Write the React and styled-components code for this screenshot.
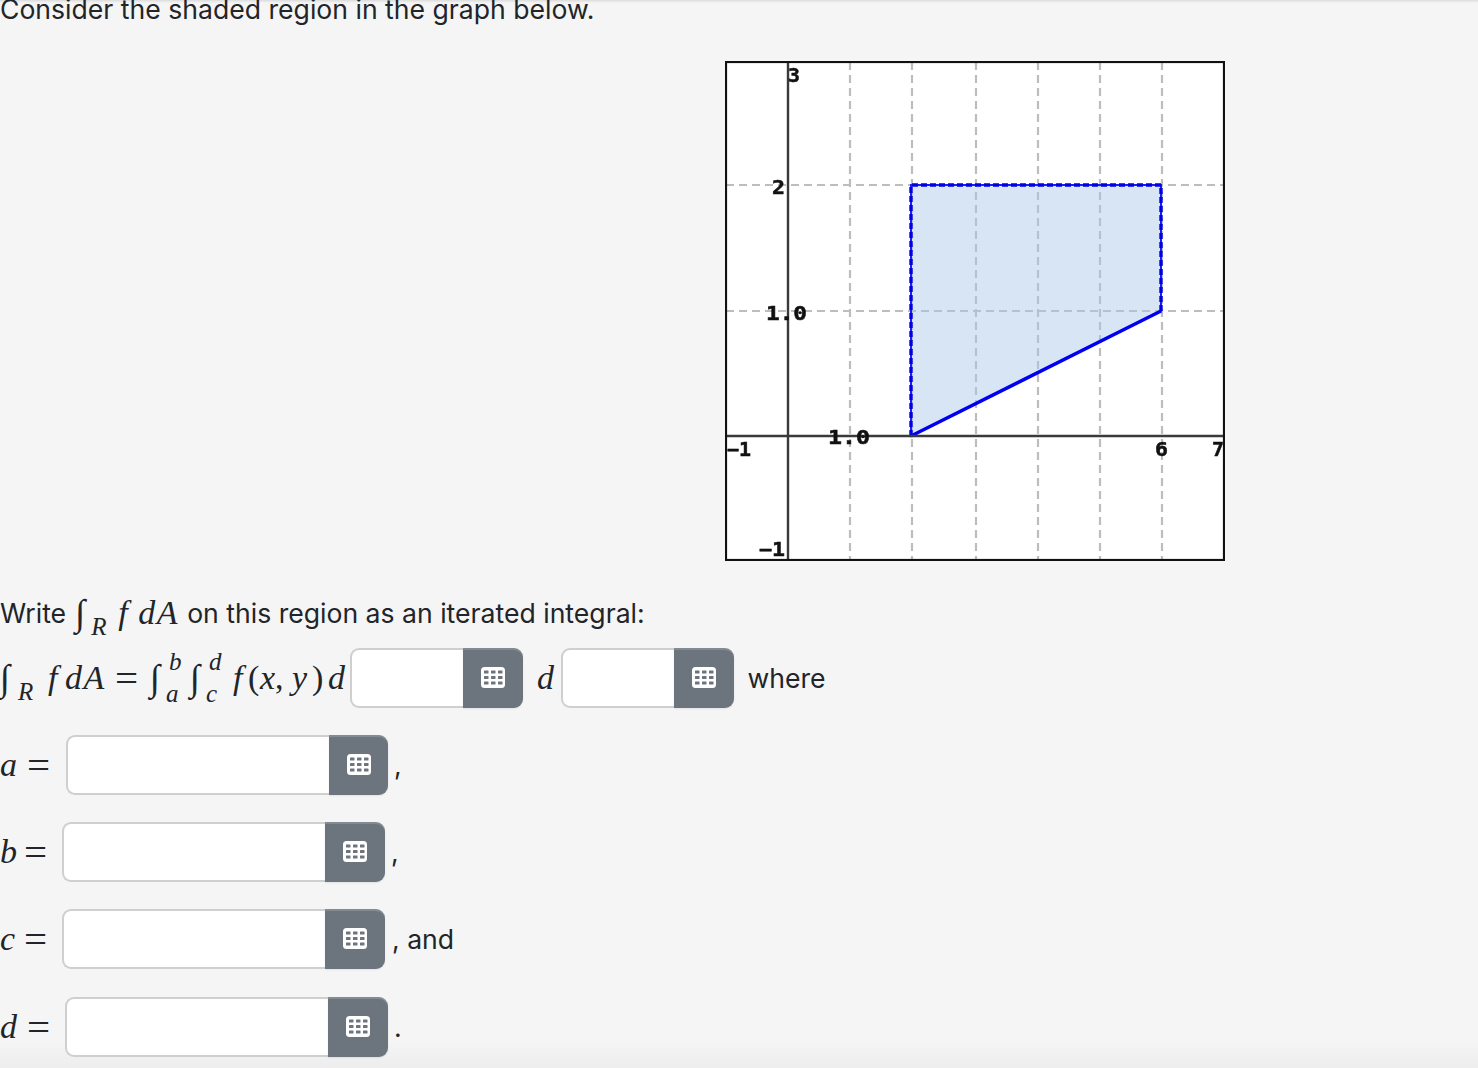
import React from "react";
import styled, { createGlobalStyle } from "styled-components";

const Global = createGlobalStyle`
  html, body { margin: 0; padding: 0; height: 100%; overflow: hidden; background: #f5f5f5; }
  #root { height: 100%; }
`;

const Page = styled.main`
  height: 1068px;
  overflow: hidden;
  position: relative;
  background: #f5f5f5;
  color: #212529;
  font-family: Inter, "Liberation Sans", sans-serif;
  font-size: 26.6px;
  line-height: 40px;
  &::before {
    content: "";
    position: absolute;
    inset: 0 0 auto 0;
    height: 3px;
    background: linear-gradient(rgba(0, 0, 0, 0.1), rgba(0, 0, 0, 0));
    z-index: 2;
  }
  &::after {
    content: "";
    position: absolute;
    inset: auto 0 0 0;
    height: 26px;
    background: linear-gradient(rgba(235, 235, 235, 0), rgba(235, 235, 235, 0.8));
    pointer-events: none;
    z-index: 0;
  }
`;

const Content = styled.div`
  position: relative;
  z-index: 1;
  margin-top: -11px;
`;

const Prompt = styled.p`
  margin: 0;
`;

const Figure = styled.figure`
  margin: 32px 0 0 725px;
  width: 500px;
  height: 500px;
  line-height: 0;
`;

const GraphSvg = styled.svg`
  display: block;
  filter: blur(0.4px);
`;

const Para = styled.p`
  margin: 32px 0 0;
  height: 40px;
  display: flex;
  align-items: center;
  white-space: pre;
`;

const FormulaRow = styled.div`
  margin-top: 15px;
  display: flex;
  align-items: center;
  height: 60px;
  white-space: pre;
`;

const Math = styled.span`
  display: inline-flex;
  align-items: center;
  font-family: "Liberation Serif", "DejaVu Serif", serif;
  font-size: 34px;
  line-height: 40px;
  color: #212529;
  flex: none;
  width: ${(p) => (p.$w ? `${p.$w}px` : "auto")};
  margin-left: ${(p) => p.$ml || 0}px;
`;

const Var = styled.i`
  display: inline-block;
  flex: none;
  font-style: italic;
  box-sizing: border-box;
  width: ${(p) => (p.$w ? `${p.$w}px` : "auto")};
  padding-left: ${(p) => p.$pl || 0}px;
  letter-spacing: ${(p) => p.$ls || 0}px;
`;

const Punct = styled.span`
  display: inline-block;
  flex: none;
  width: ${(p) => p.$w}px;
`;

const Op = styled.span`
  display: inline-block;
  flex: none;
  font-size: 41px;
  width: 23px;
  margin-left: ${(p) => p.$ml || 0}px;
  margin-right: ${(p) => p.$mr || 0}px;
`;

const Sign = styled.span`
  display: inline-block;
  flex: none;
  width: 16px;
  font-size: 37px;
  font-style: italic;
  line-height: 40px;
`;

const Limits = styled.span`
  display: inline-flex;
  flex: none;
  flex-direction: column;
  justify-content: center;
  font-family: "Liberation Serif", serif;
  font-style: italic;
  font-size: 25px;
  line-height: 18px;
  width: ${(p) => p.$w}px;
  margin-left: ${(p) => p.$ml || 0}px;
`;

const Lim = styled.span`
  position: relative;
  top: ${(p) => p.$top || 0}px;
  left: ${(p) => p.$left || 0}px;
  height: 18px;
`;

const Group = styled.div`
  display: flex;
  flex: none;
  width: ${(p) => p.$w}px;
  height: 60px;
`;

const Field = styled.input`
  flex: 1;
  min-width: 0;
  box-sizing: border-box;
  height: 60px;
  border: 2px solid #cfcfcf;
  border-right: 0;
  border-radius: 9px 0 0 9px;
  background: #fff;
  outline: none;
  padding: 0;
`;

const CalcButton = styled.button`
  flex: none;
  width: ${(p) => p.$bw || 60}px;
  height: 60px;
  padding: 0 0 2px;
  border: 0;
  border-radius: 0 9px 9px 0;
  background: #6c757d;
  box-shadow: inset 0 2px 0 rgba(255, 255, 255, 0.16), 0 1px 2px rgba(0, 0, 0, 0.08);
  display: flex;
  align-items: center;
  justify-content: center;
`;

const AnswerRow = styled.div`
  display: flex;
  align-items: center;
  height: 60px;
  margin-top: ${(p) => p.$mt}px;
  white-space: pre;
`;

const After = styled.span`
  margin-left: ${(p) => p.$ml || 0}px;
`;

const GridIcon = () => (
  <svg width="24" height="21" viewBox="0 0 24 21" aria-hidden="true">
    <rect width="24" height="21" rx="3.5" fill="#fff" />
    {[3.5, 9, 14.5].map((y) =>
      [3, 10, 17].map((x) => <rect key={`${x}-${y}`} x={x} y={y} width="4.5" height="3" rx="0.5" fill="#6c757d" />)
    )}
  </svg>
);

const Answer = ({ w, bw }) => (
  <Group $w={w}>
    <Field />
    <CalcButton type="button" $bw={bw}>
      <GridIcon />
    </CalcButton>
  </Group>
);

const xs = [850, 912, 976, 1038, 1100, 1162];
const ys = [185, 311];
const labels = [
  { x: 788, y: 82, t: "3", len: 12 },
  { x: 772, y: 194, t: "2", len: 13 },
  { x: 766, y: 320, t: "1.0", len: 41 },
  { x: 828, y: 444, t: "1.0", len: 42 },
  { x: 727, y: 456, t: "−1", len: 24 },
  { x: 759, y: 556, t: "−1", len: 26 },
  { x: 1155, y: 456, t: "6", len: 13 },
  { x: 1212, y: 456, t: "7", len: 12 },
];

const Graph = () => (
  <GraphSvg width="500" height="500" viewBox="725 61 500 500">
    <rect x="726" y="62" width="498" height="498" fill="#fff" />
    <g stroke="#bdbdbd" strokeWidth="2.2" strokeDasharray="8 5" fill="none">
      {xs.map((x) => <line key={x} x1={x} y1="62" x2={x} y2="560" />)}
      {ys.map((y) => <line key={y} x1="726" y1={y} x2="1224" y2={y} />)}
    </g>
    <polygon points="911,436 911,185 1161,185 1161,311" fill="#a9c6e6" fillOpacity="0.45" />
    <polygon points="911,436 911,185 1161,185 1161,311" fill="none" stroke="#1c1cf0" strokeWidth="2" />
    <polyline points="911,436 911,185 1161,185 1161,311" fill="none" stroke="#0000e6" strokeWidth="3.4" strokeDasharray="6 3" />
    <line x1="911" y1="436" x2="1161" y2="311" stroke="#0000f0" strokeWidth="3.4" />
    <g stroke="#3a3a3a" strokeWidth="2.4">
      <line x1="788" y1="62" x2="788" y2="560" />
      <line x1="726" y1="436" x2="1224" y2="436" />
    </g>
    <rect x="726" y="62" width="498" height="498" fill="none" stroke="#111" strokeWidth="2.2" />
    <g fontFamily="'DejaVu Sans Mono', monospace" fontWeight="700" fontSize="19" fill="#111" stroke="#111" strokeWidth="0.5">
      {labels.map((l) => (
        <text key={`${l.x}-${l.y}`} x={l.x} y={l.y} textLength={l.len} lengthAdjust="spacingAndGlyphs">{l.t}</text>
      ))}
    </g>
  </GraphSvg>
);

export default function App() {
  return (
    <Page>
      <Global />
      <Content>
        <Prompt>Consider the shaded region in the graph below.</Prompt>
        <Figure>
          <Graph />
        </Figure>
        <Para>
          Write
          <Math $ml={9} $w={105}>
            <Sign>∫</Sign>
            <Limits $w={24}>
              <Lim $top={14}>R</Lim>
            </Limits>
            <Var $w={23} $pl={3}>f</Var>
            <Var $ls={1.5}>dA</Var>
          </Math>
          <After $ml={7}>on this region as an iterated integral:</After>
        </Para>
        <FormulaRow>
          <Math $w={350}>
            <Sign>∫</Sign>
            <Limits $w={27} $ml={2}>
              <Lim $top={14}>R</Lim>
            </Limits>
            <Var $w={20} $pl={3}>f</Var>
            <Var $w={50} $ls={1.5}>dA</Var>
            <Op $mr={12}>=</Op>
            <Sign>∫</Sign>
            <Limits $w={24}>
              <Lim $top={-7} $left={3}>b</Lim>
              <Lim $top={7}>a</Lim>
            </Limits>
            <Sign>∫</Sign>
            <Limits $w={26}>
              <Lim $top={-7} $left={3}>d</Lim>
              <Lim $top={7}>c</Lim>
            </Limits>
            <Var $w={16} $pl={1}>f</Var>
            <Punct $w={12}>(</Punct>
            <Var $w={15}>x</Var>
            <Punct $w={17}>,</Punct>
            <Var $w={20}>y</Var>
            <Punct $w={16}>)</Punct>
            <Var>d</Var>
          </Math>
          <Answer w={173} />
          <Math $w={38}>
            <Var $pl={14}>d</Var>
          </Math>
          <Answer w={173} />
          <After $ml={13.5}>where</After>
        </FormulaRow>
        <AnswerRow $mt={27}>
          <Math $w={66}><Var $w={27}>a</Var><Op>=</Op></Math>
          <Answer w={322} bw={59} />
          <After $ml={6}>,</After>
        </AnswerRow>
        <AnswerRow $mt={27}>
          <Math $w={62}><Var $w={24}>b</Var><Op>=</Op></Math>
          <Answer w={323} />
          <After $ml={6}>,</After>
        </AnswerRow>
        <AnswerRow $mt={27}>
          <Math $w={62}><Var $w={24}>c</Var><Op>=</Op></Math>
          <Answer w={323} />
          <After $ml={7}>, and</After>
        </AnswerRow>
        <AnswerRow $mt={28}>
          <Math $w={65}><Var $w={27}>d</Var><Op>=</Op></Math>
          <Answer w={323} />
          <After $ml={6}>.</After>
        </AnswerRow>
      </Content>
    </Page>
  );
}
